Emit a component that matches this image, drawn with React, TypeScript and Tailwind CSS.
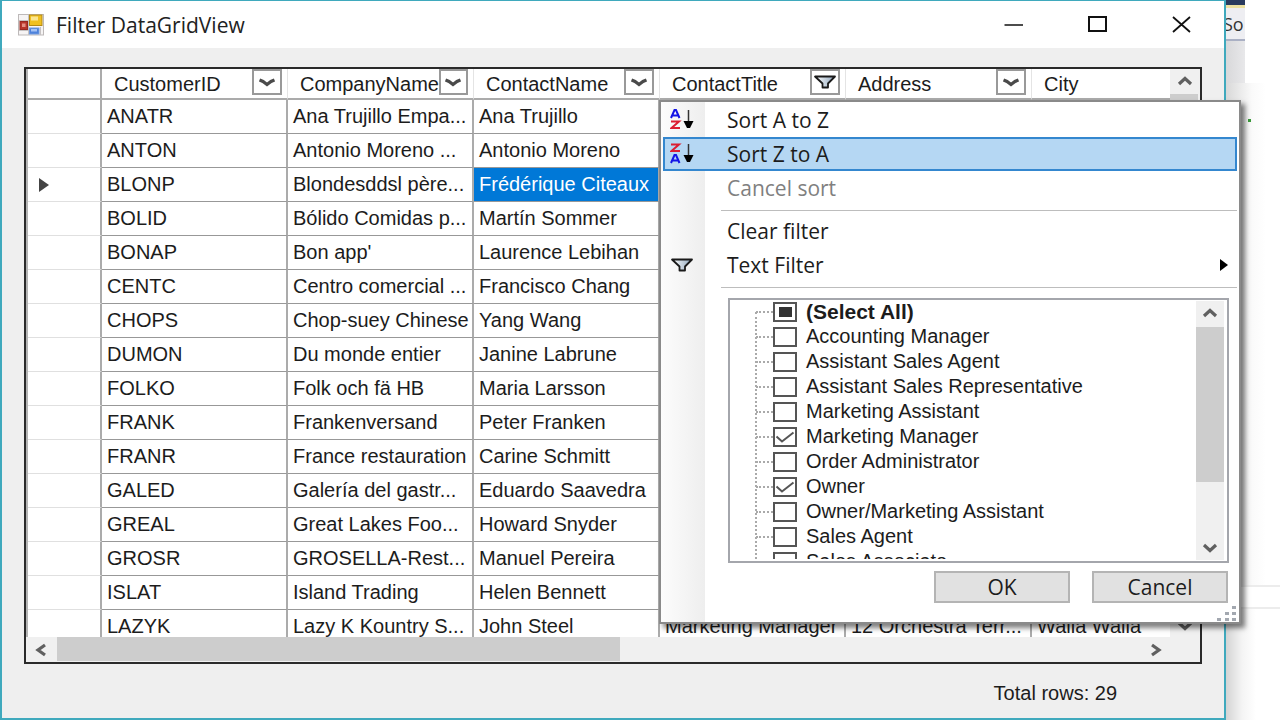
import { useEffect, useRef } from "react";

const columns = [
  { name: "CustomerID", button: "drop" },
  { name: "CompanyName", button: "drop" },
  { name: "ContactName", button: "drop" },
  { name: "ContactTitle", button: "funnel" },
  { name: "Address", button: "drop" },
  { name: "City", button: null },
];

const rows = [
  ["ANATR", "Ana Trujillo Empa...", "Ana Trujillo"],
  ["ANTON", "Antonio Moreno ...", "Antonio Moreno"],
  ["BLONP", "Blondesddsl père...", "Frédérique Citeaux"],
  ["BOLID", "Bólido Comidas p...", "Martín Sommer"],
  ["BONAP", "Bon app'", "Laurence Lebihan"],
  ["CENTC", "Centro comercial ...", "Francisco Chang"],
  ["CHOPS", "Chop-suey Chinese", "Yang Wang"],
  ["DUMON", "Du monde entier", "Janine Labrune"],
  ["FOLKO", "Folk och fä HB", "Maria Larsson"],
  ["FRANK", "Frankenversand", "Peter Franken"],
  ["FRANR", "France restauration", "Carine Schmitt"],
  ["GALED", "Galería del gastr...", "Eduardo Saavedra"],
  ["GREAL", "Great Lakes Foo...", "Howard Snyder"],
  ["GROSR", "GROSELLA-Rest...", "Manuel Pereira"],
  ["ISLAT", "Island Trading", "Helen Bennett"],
  ["LAZYK", "Lazy K Kountry S...", "John Steel", "Marketing Manager", "12 Orchestra Terr...", "Walla Walla"],
];

const currentRow = "BLONP";

const options = [
  { label: "(Select All)", state: "mixed" },
  { label: "Accounting Manager", state: "off" },
  { label: "Assistant Sales Agent", state: "off" },
  { label: "Assistant Sales Representative", state: "off" },
  { label: "Marketing Assistant", state: "off" },
  { label: "Marketing Manager", state: "on" },
  { label: "Order Administrator", state: "off" },
  { label: "Owner", state: "on" },
  { label: "Owner/Marketing Assistant", state: "off" },
  { label: "Sales Agent", state: "off" },
  { label: "Sales Associate", state: "off" },
];

const chevrons = {
  up: "M2 10 L8 4.500 L14 10",
  down: "M2 6 L8 11.500 L14 6",
  left: "M11 3 L4 8 L11 13",
  right: "M5 3 L12 8 L5 13",
};

function Chevron({ dir }: { dir: keyof typeof chevrons }) {
  return (
    <svg className="h-4 w-4" viewBox="0 0 16 16" fill="none" stroke="#606060" strokeWidth="3.2">
      <path d={chevrons[dir]} />
    </svg>
  );
}

function DropArrow() {
  return (
    <svg className="h-4 w-4" viewBox="0 0 16 16" fill="none" stroke="#4a4a4a" strokeWidth="3.2">
      <path d="M0.500 6 L4 7.500 L8 10.500 L12 7.500 L15.500 6" />
    </svg>
  );
}

function Funnel() {
  return (
    <svg className="h-4 w-6" viewBox="0 0 24 16" strokeLinejoin="round">
      <defs>
        <linearGradient id="funnel" x1="0" x2="1">
          <stop offset="0" stopColor="#ffffff" />
          <stop offset="1" stopColor="#8fa6bd" />
        </linearGradient>
      </defs>
      <path d="M2 2.500 H22 L15 9.500 V13.500 H9.500 V9.500 Z" fill="url(#funnel)" stroke="#1a1a1a" strokeWidth="1.800" />
    </svg>
  );
}

function SortIcon({ descending }: { descending?: boolean }) {
  const a = <path d="M1 9 L4.500 1 H6 L9.500 9 M2.500 6.500 H8" stroke="#1414e6" />;
  const z = <path d="M1 1.500 H9 L1.500 8 H10" stroke="#dc1e32" />;
  return (
    <svg className="h-[22px] w-6" viewBox="0 0 24 22" fill="none" strokeWidth="2">
      {descending ? z : a}
      <g transform="translate(0 11)">{descending ? a : z}</g>
      <path d="M18.500 1 V14" stroke="#333" strokeWidth="1.500" />
      <path d="M13.500 12 H23.500 L20 19 H17 Z" fill="#000" />
    </svg>
  );
}

function AppIcon() {
  return (
    <svg className="h-[22px] w-[26px]" viewBox="0 0 26 22">
      <rect x="0.500" y="0.500" width="25" height="20.500" fill="#f6f4f4" stroke="#bdb9b9" />
      <path d="M10.500 1 V21 M1 6.500 H10 M1 16.500 H10 M22.500 13 V21" stroke="#c6c2c2" />
      <rect x="2" y="7.500" width="7.500" height="8" fill="#b8352a" stroke="#96281f" />
      <rect x="4" y="9.500" width="3.500" height="3.500" fill="#e58e82" />
      <rect x="11.500" y="1" width="12.500" height="10.500" fill="#f0c020" stroke="#b58a12" />
      <rect x="13" y="2.500" width="7" height="4" fill="#fbe690" />
      <rect x="11.500" y="14" width="9.500" height="6" fill="#4d82dc" stroke="#6f98dc" />
      <rect x="13" y="15" width="6" height="2.500" fill="#a4c2f4" />
    </svg>
  );
}

function TitleBar() {
  return (
    <header className="flex h-[47px] flex-none items-center bg-white pl-4 font-['Open_Sans','Noto_Sans',sans-serif]">
      <AppIcon />
      <h1 className="ml-3 flex-1 text-[21px] leading-6 text-[#222]">Filter DataGridView</h1>
      <button aria-label="Minimize" className="flex h-full w-[84px] items-center justify-center">
        <svg className="h-5 w-5" viewBox="0 0 20 20" stroke="#111" strokeWidth="1.500">
          <path d="M0.500 10 H19" />
        </svg>
      </button>
      <button aria-label="Maximize" className="flex h-full w-[84px] items-center justify-center">
        <svg className="h-5 w-5" viewBox="0 0 20 20" fill="none" stroke="#111" strokeWidth="2">
          <rect x="1" y="2" width="17" height="14" />
        </svg>
      </button>
      <button aria-label="Close" className="flex h-full w-[84px] items-center justify-center">
        <svg className="h-5 w-5" viewBox="0 0 20 20" stroke="#111" strokeWidth="1.800">
          <path d="M1 2 L18 17 M18 2 L1 17" />
        </svg>
      </button>
    </header>
  );
}

function DataGrid() {
  return (
    <div className="flex min-h-0 flex-1 border-2 border-[#2a2a2a] bg-white">
      <div className="flex min-w-0 flex-1 flex-col">
        <div className="min-h-0 flex-1 overflow-hidden border-l-2 border-[#b4b4b4]">
          <table className="w-[1190px] table-fixed border-separate border-spacing-0 text-xl leading-6 text-[#1c1c1c]">
            <colgroup>
              <col className="w-[74px]" />
              {columns.map((c) => (
                <col key={c.name} className="w-[186px]" />
              ))}
            </colgroup>
            <thead>
              <tr className="h-[31px]">
                <th className="border-r-2 border-b-2 border-[#ababab] p-0" />
                {columns.map((c) => (
                  <th
                    key={c.name}
                    className="border-r border-b-2 border-r-[#e4e4e4] border-b-[#ababab] p-0 text-left align-top font-normal"
                  >
                    <div className="flex items-start justify-between pr-[5px] pl-3">
                      <span className="pt-[3px]">{c.name}</span>
                      {c.button && (
                        <button
                          aria-label={`Filter ${c.name}`}
                          className="flex h-[26px] w-[30px] items-center justify-center border-2 border-[#999] bg-white"
                        >
                          {c.button === "funnel" ? <Funnel /> : <DropArrow />}
                        </button>
                      )}
                    </div>
                  </th>
                ))}
              </tr>
            </thead>
            <tbody>
              {rows.map((row) => (
                <tr key={row[0]} className="h-[34px]">
                  <th className="border-r-2 border-b border-r-[#ababab] border-b-[#e0e0e0] p-0">
                    {row[0] === currentRow && (
                      <svg className="ml-[10px] h-4 w-3" viewBox="0 0 12 16">
                        <path d="M1 1 V15 L11 8 Z" fill="#444" />
                      </svg>
                    )}
                  </th>
                  {columns.map((c, i) => (
                    <td
                      key={c.name}
                      className={
                        row[0] === currentRow && i === 2
                          ? "border-r-2 border-b border-r-[#ababab] border-b-[#989898] bg-[#0078d7] pt-0 pr-0 pb-[2px] pl-[5px] whitespace-nowrap text-white"
                          : "border-r-2 border-b border-r-[#ababab] border-b-[#989898] pt-0 pr-0 pb-[2px] pl-[5px] whitespace-nowrap"
                      }
                    >
                      {row[i] ?? ""}
                    </td>
                  ))}
                </tr>
              ))}
            </tbody>
          </table>
        </div>
        <div className="flex h-[25px] flex-none items-stretch bg-[#f0f0f0]">
          <button aria-label="Scroll left" className="flex w-[31px] items-center justify-center">
            <Chevron dir="left" />
          </button>
          <div className="flex-1">
            <div className="h-6 w-[52%] bg-[#cdcdcd]" />
          </div>
          <button aria-label="Scroll right" className="flex w-[31px] items-center justify-center">
            <Chevron dir="right" />
          </button>
        </div>
      </div>
      <div className="flex w-[30px] flex-none flex-col bg-[#f0f0f0] pb-[25px]">
        <button aria-label="Scroll up" className="flex h-[25px] items-center justify-center">
          <Chevron dir="up" />
        </button>
        <div className="flex-1 pr-[2px]">
          <div className="h-1/2 bg-[#cdcdcd]" />
        </div>
        <button aria-label="Scroll down" className="flex h-[25px] items-center justify-center">
          <Chevron dir="down" />
        </button>
      </div>
    </div>
  );
}

function TreeOption({ label, state }: { label: string; state: string }) {
  const box = useRef<HTMLInputElement>(null);
  useEffect(() => {
    if (box.current) box.current.indeterminate = state === "mixed";
  }, [state]);

  return (
    <li className="flex flex-1 items-center pl-[26px]">
      <span className="w-[17px] border-t-2 border-dotted border-[#aaa]" />
      <label className="flex items-center">
        <span className="grid h-5 w-6 place-items-center">
          <input
            ref={box}
            type="checkbox"
            defaultChecked={state === "on"}
            className="col-start-1 row-start-1 h-5 w-6 appearance-none border-2 border-[#555] bg-white"
          />
          {state === "on" && (
            <svg className="col-start-1 row-start-1 h-4 w-5" viewBox="0 0 20 16" fill="none" stroke="#555" strokeWidth="2">
              <path d="M1.500 7.500 L7 12.500 L18.500 3.500" />
            </svg>
          )}
          {state === "mixed" && <span className="col-start-1 row-start-1 h-[10px] w-[13px] bg-[#333]" />}
        </span>
        <span
          className={
            state === "mixed" ? "ml-[9px] text-[21px] leading-6 font-bold" : "ml-[9px] pb-px text-xl leading-6"
          }
        >
          {label}
        </span>
      </label>
    </li>
  );
}

function MenuItem({ label, icon, state }: { label: string; icon?: React.ReactNode; state?: "active" | "disabled" }) {
  return (
    <button
      disabled={state === "disabled"}
      className={
        state === "active"
          ? "flex h-[34px] w-full items-center border-2 border-[#3487cf] bg-[#b5d7f3] pl-[5px] text-left"
          : "flex h-[34px] w-full items-center pl-[7px] text-left disabled:text-[#808080]"
      }
    >
      <span className="flex w-[57px] flex-none">{icon}</span>
      <span className="flex-1">{label}</span>
      {label === "Text Filter" && (
        <svg className="mr-[9px] h-3 w-2" viewBox="0 0 8 12">
          <path d="M0 0 V12 L8 6 Z" />
        </svg>
      )}
    </button>
  );
}

function FilterMenu() {
  return (
    <div className="absolute top-[100px] left-[659px] w-[582px] border-2 border-[#8a8a8a] bg-[linear-gradient(to_right,#fcfcfc,#eeeeee_44px,#ffffff_44px)] px-[2px] pt-px text-xl text-[#1c1c1c] shadow-[4px_4px_5px_rgba(0,0,0,0.5)]">
      <div className="font-['Open_Sans','Noto_Sans',sans-serif] text-[21px] leading-6">
        <MenuItem label="Sort A to Z" icon={<SortIcon />} />
        <MenuItem label="Sort Z to A" icon={<SortIcon descending />} state="active" />
        <MenuItem label="Cancel sort" state="disabled" />
        <hr className="mt-[5px] mb-[3px] ml-[58px] border-[#bdbdbd]" />
        <MenuItem label="Clear filter" />
        <MenuItem label="Text Filter" icon={<Funnel />} />
        <hr className="mt-[5px] mb-[10px] ml-[58px] border-[#bdbdbd]" />
      </div>
      <div className="mr-2 ml-[65px] flex h-[265px] border-2 border-[#a4a6ac] bg-white">
        <div className="relative mb-[2px] flex-1 overflow-hidden">
          <div className="absolute top-3 bottom-0 left-[25px] border-l-2 border-dotted border-[#aaa]" />
          <ul className="flex h-[271px] flex-col">
            {options.map((o) => (
              <TreeOption key={o.label} label={o.label} state={o.state} />
            ))}
          </ul>
        </div>
        <div className="my-px mr-[3px] flex w-[28px] flex-none flex-col bg-[#f0f0f0]">
          <button aria-label="Scroll up" className="flex h-[26px] items-center justify-center">
            <Chevron dir="up" />
          </button>
          <div className="flex-1">
            <div className="h-3/4 bg-[#cdcdcd]" />
          </div>
          <button aria-label="Scroll down" className="flex h-[26px] items-center justify-center">
            <Chevron dir="down" />
          </button>
        </div>
      </div>
      <div className="mt-2 mr-[9px] flex justify-end gap-[22px] font-['Open_Sans','Noto_Sans',sans-serif] text-[21px]">
        <button className="h-8 w-[136px] border-2 border-[#b4b4b4] bg-[#e1e1e1] leading-7">OK</button>
        <button className="h-8 w-[136px] border-2 border-[#b4b4b4] bg-[#e1e1e1] leading-7">Cancel</button>
      </div>
      <div className="flex h-[19px] items-end justify-end">
        <svg className="h-4 w-5" viewBox="0 0 20 16" fill="#a3a8b0">
          <path d="M15 0h4v3h-4z M8 6h4v3h-4z M15 6h4v3h-4z M0 12h4v3h-4z M8 12h4v3h-4z M15 12h4v3h-4z" />
        </svg>
      </div>
    </div>
  );
}

function Backdrop() {
  return (
    <aside className="w-[54px] flex-none overflow-hidden bg-white">
      <div className="h-[83px] w-[19px] overflow-hidden bg-[linear-gradient(to_right,#d8d8da,#e8e8ea)]">
        <div className="h-[5px] bg-[#293a5e]" />
        <div className="h-[3px] bg-[#ece0a0]" />
        <div className="h-[33px] border-b-2 border-[#aab0c4] bg-[#eeeef2] font-['Open_Sans','Noto_Sans',sans-serif] text-lg leading-8 text-[#333]">
          <span className="-ml-[3px]">So</span>
        </div>
      </div>
      <div className="h-[502px] bg-[linear-gradient(to_right,#d8d8d8,#fafafa_26px,#ffffff_40px)] pt-9 pl-[22px]">
        <div className="h-[3px] w-[3px] bg-[#3a9a3a]" />
      </div>
      <div className="h-6 border-y-2 border-[#ececec]" />
      <div className="h-[111px] bg-[linear-gradient(to_right,#d4d4d4,#f4f4f4_16px,#ffffff_30px)]" />
    </aside>
  );
}

export default function App() {
  return (
    <div className="relative flex h-screen min-h-[720px] overflow-hidden bg-white font-['Liberation_Sans',Arial,sans-serif]">
      <main className="flex min-w-0 flex-1 flex-col border-2 border-t-1 border-[#3fa9bd] bg-[#efefef]">
        <TitleBar />
        <div className="flex min-h-0 flex-1 flex-col pt-[19px] pr-[22px] pl-[22px]">
          <DataGrid />
          <footer className="flex h-[54px] flex-none items-center justify-end pt-1 pr-[85px] text-xl text-[#1c1c1c]">
            Total rows: 29
          </footer>
        </div>
      </main>
      <Backdrop />
      <FilterMenu />
    </div>
  );
}
